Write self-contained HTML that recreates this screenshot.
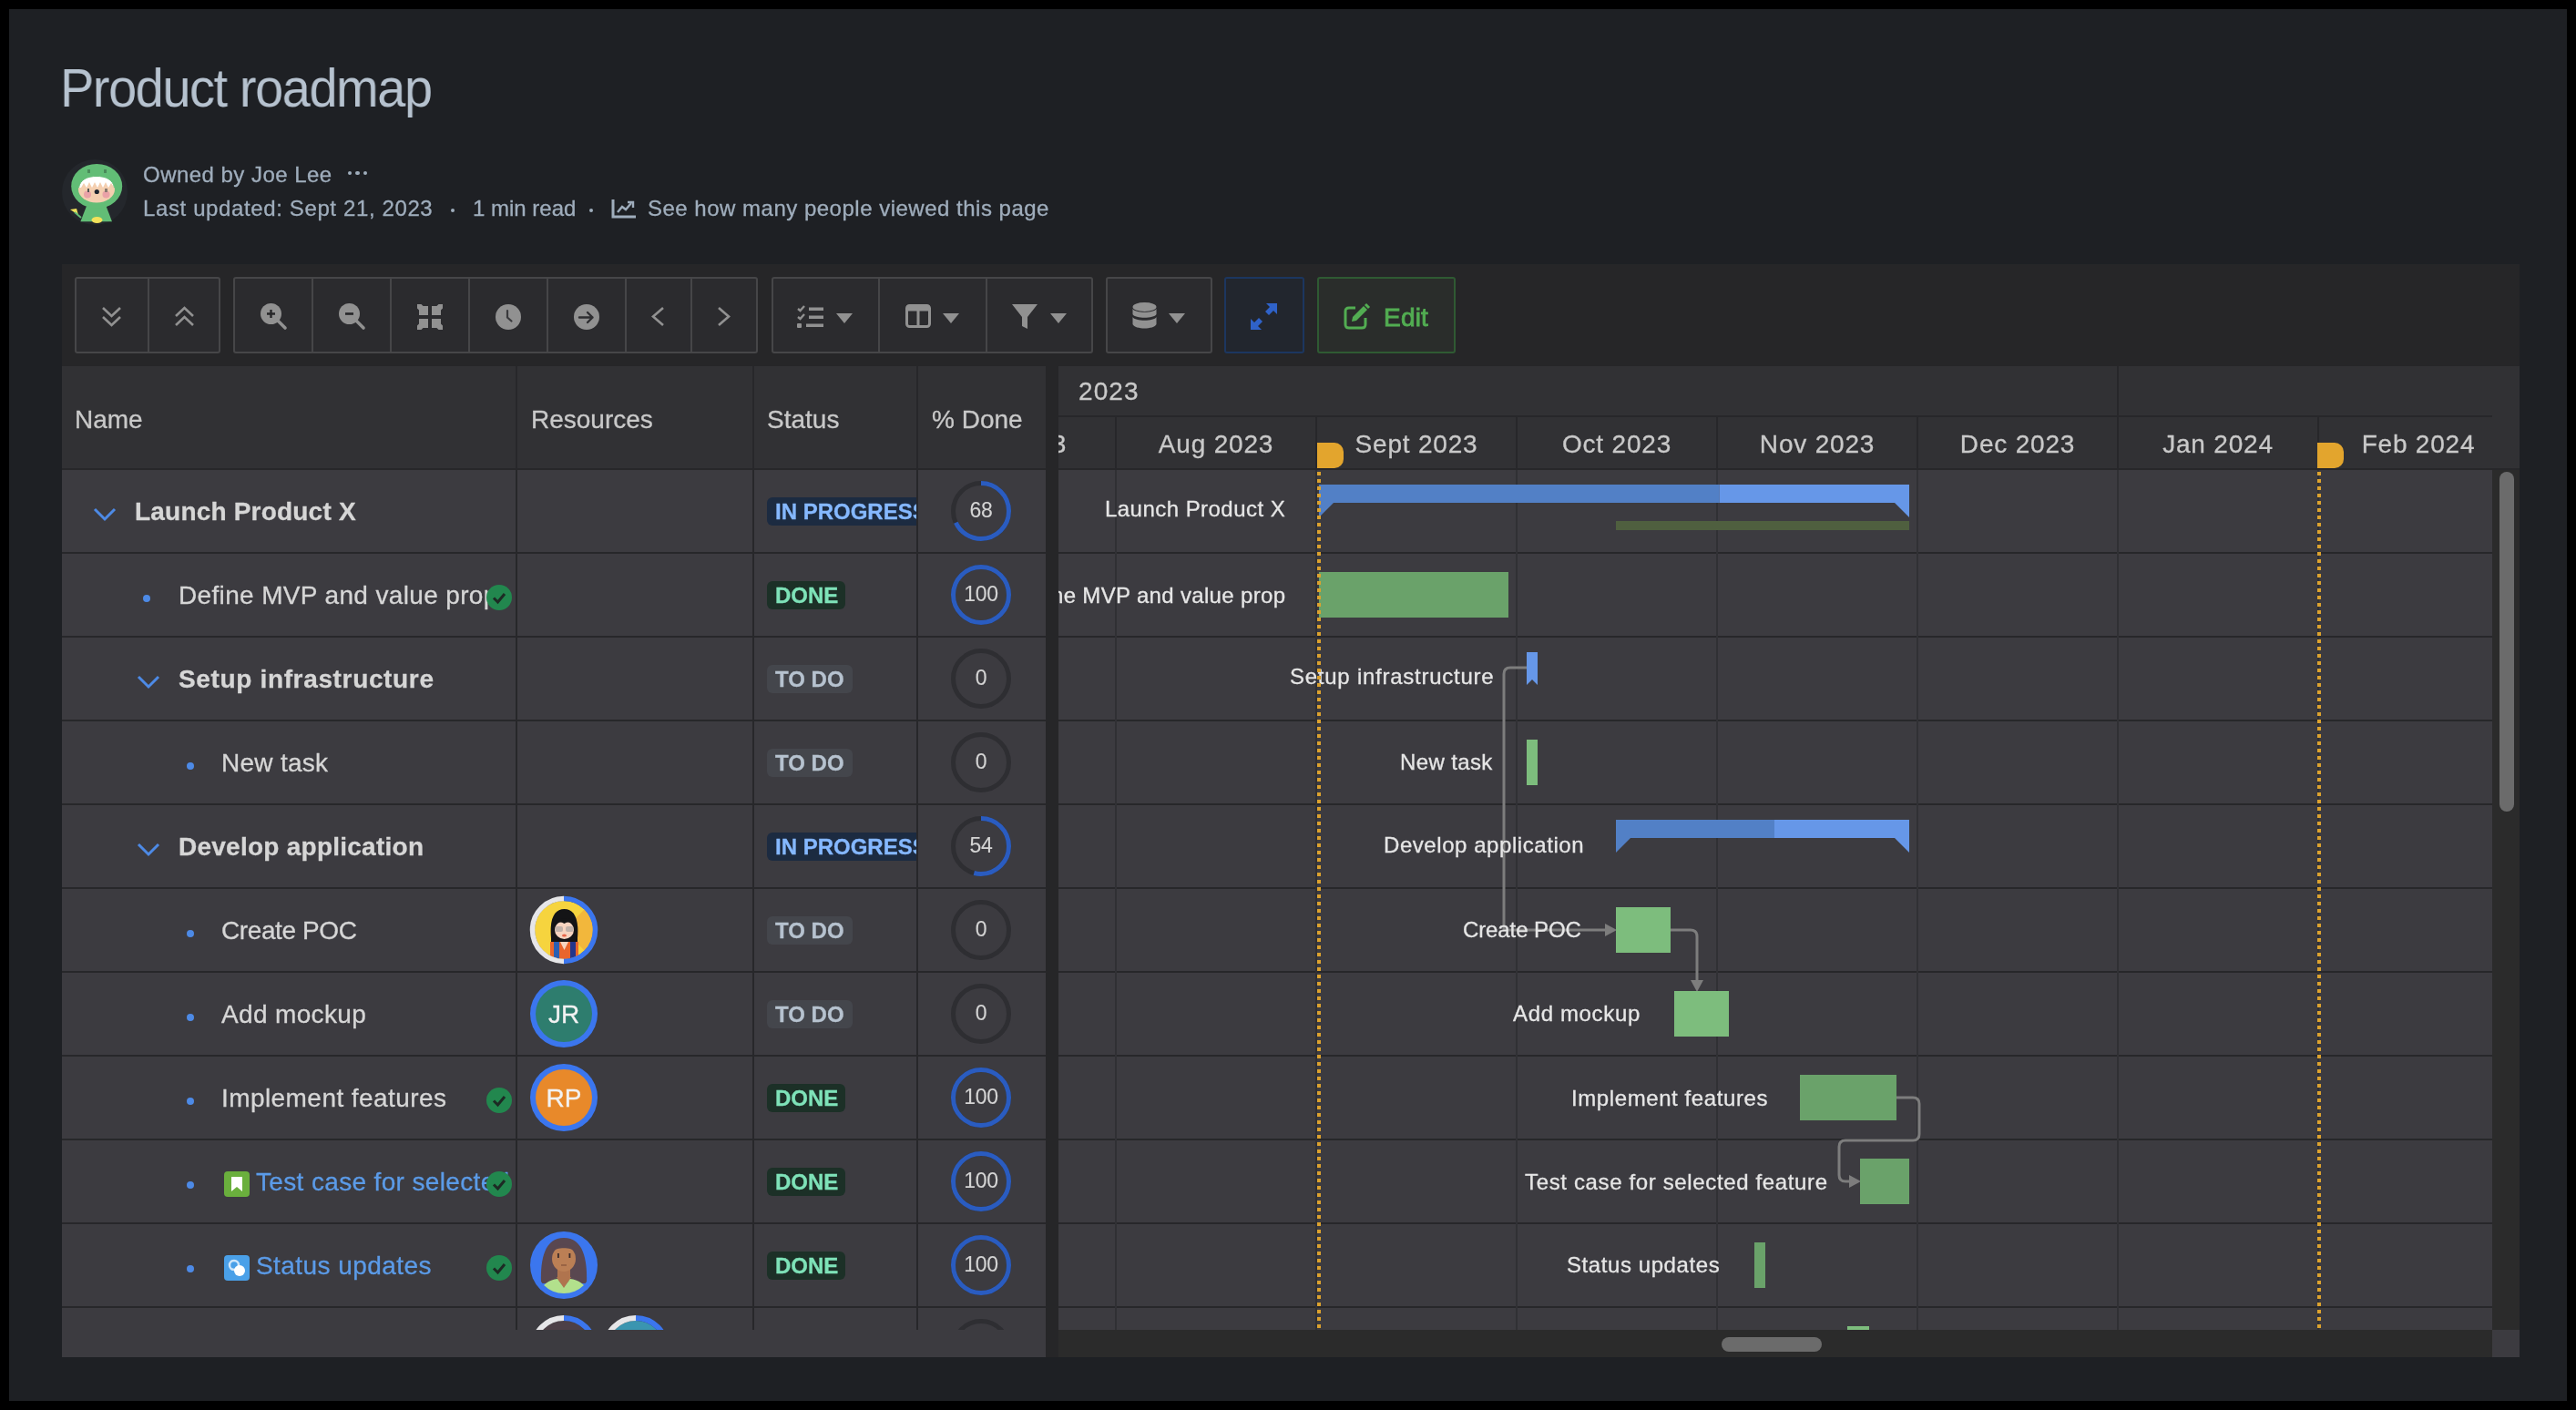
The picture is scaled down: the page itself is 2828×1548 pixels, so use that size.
<!DOCTYPE html><html><head><meta charset="utf-8"><style>
html,body{margin:0;padding:0;}
body{width:2828px;height:1548px;background:#000;position:relative;overflow:hidden;font-family:"Liberation Sans", sans-serif;}
.t{position:absolute;white-space:nowrap;will-change:transform;-webkit-text-stroke-width:0.3px;}
.r{position:absolute;}
.clip{position:absolute;overflow:hidden;}
svg{position:absolute;overflow:visible;}
</style></head><body>
<div class="r" style="left:10.00px;top:10.00px;width:2808.00px;height:1528.00px;background:#1e2024;"></div>
<div class="t" style="left:66.40px;top:67.21px;font-size:60px;line-height:60px;color:#b6c2cf;font-weight:400;letter-spacing:-1.5px;transform:scaleX(0.931);transform-origin:0 0;-webkit-text-stroke-width:0;">Product roadmap</div>
<svg style="left:68px;top:175px" width="72" height="72" viewBox="0 0 72 72">
<circle cx="36" cy="36" r="36" fill="#24272c"/>
<path d="M26.7 52 H48.8 L55 68.3 H20.4Z" fill="#62bd76"/>
<ellipse cx="38.5" cy="66.5" rx="6" ry="3.5" fill="#f2e25a"/>
<path d="M9 55 L16 54 L18 61Z" fill="#f2e25a"/>
<path d="M14 58 L21 64" stroke="#62bd76" stroke-width="2"/>
<ellipse cx="38.2" cy="29.4" rx="28" ry="24.5" fill="#62bd76"/>
<ellipse cx="38" cy="33" rx="20" ry="14.5" fill="#f4cfb0"/>
<path d="M18.5 31 C20 22 28 18.5 38 18.5 C48 18.5 56 22 57.5 31 L54 26 L51 31 L48 25 L45 31 L42 25 L39 31 L36 25 L33 31 L30 25 L27 31 L24 26 L21 31Z" fill="#ffffff"/>
<path d="M18.5 31 C20 22 28 18.5 38 18.5 C48 18.5 56 22 57.5 31" fill="none" stroke="#62bd76" stroke-width="1"/>
<circle cx="28" cy="38.5" r="4" fill="#e89aa6" opacity="0.85"/><circle cx="48.5" cy="38.5" r="4" fill="#e89aa6" opacity="0.85"/>
<rect x="28" y="32" width="2" height="4" fill="#555"/><rect x="47" y="32" width="3" height="4" fill="#8a7a70"/>
<circle cx="38.3" cy="35.5" r="2.6" fill="#1e2630"/>
<rect x="28" y="11" width="3" height="4" fill="#4a8a5a"/><rect x="46" y="11" width="3" height="4" fill="#4a8a5a"/>
</svg>
<div class="t" style="left:157.00px;top:179.68px;font-size:24px;line-height:24px;color:#9fadbc;font-weight:400;letter-spacing:0.47px;">Owned by Joe Lee</div>
<div class="r" style="left:381.50px;top:187.50px;width:4.50px;height:4.50px;background:#9fadbc;border-radius:50%;"></div>
<div class="r" style="left:390.00px;top:187.50px;width:4.50px;height:4.50px;background:#9fadbc;border-radius:50%;"></div>
<div class="r" style="left:398.50px;top:187.50px;width:4.50px;height:4.50px;background:#9fadbc;border-radius:50%;"></div>
<div class="t" style="left:157.00px;top:217.18px;font-size:24px;line-height:24px;color:#9fadbc;font-weight:400;letter-spacing:0.62px;">Last updated: Sept 21, 2023</div>
<div class="r" style="left:494.50px;top:228.50px;width:4.00px;height:4.00px;background:#9fadbc;border-radius:50%;"></div>
<div class="t" style="left:519.00px;top:217.18px;font-size:24px;line-height:24px;color:#9fadbc;font-weight:400;">1 min read</div>
<div class="r" style="left:646.50px;top:228.50px;width:4.00px;height:4.00px;background:#9fadbc;border-radius:50%;"></div>
<svg style="left:671px;top:218px" width="28" height="22" viewBox="0 0 28 22">
<path d="M2 1 V20 H27" fill="none" stroke="#9fadbc" stroke-width="3"/>
<path d="M7 15 L12 9 L16 12 L22 5" fill="none" stroke="#9fadbc" stroke-width="2.4"/>
<path d="M18 4 H24 V10" fill="none" stroke="#9fadbc" stroke-width="2.4"/>
</svg>
<div class="t" style="left:711.00px;top:217.18px;font-size:24px;line-height:24px;color:#9fadbc;font-weight:400;letter-spacing:0.5px;">See how many people viewed this page</div>
<div class="r" style="left:68.00px;top:290.00px;width:2698.00px;height:1200.00px;background:#262628;"></div>
<div class="r" style="left:82px;top:304px;width:160px;height:84px;box-sizing:border-box;border:2px solid #464648;border-radius:3px;background:#2b2b2e;"></div>
<div class="r" style="left:162.00px;top:304.00px;width:2.00px;height:84.00px;background:#464648;"></div>
<div class="r" style="left:256px;top:304px;width:576px;height:84px;box-sizing:border-box;border:2px solid #464648;border-radius:3px;background:#2b2b2e;"></div>
<div class="r" style="left:342.00px;top:304.00px;width:2.00px;height:84.00px;background:#464648;"></div>
<div class="r" style="left:428.00px;top:304.00px;width:2.00px;height:84.00px;background:#464648;"></div>
<div class="r" style="left:514.00px;top:304.00px;width:2.00px;height:84.00px;background:#464648;"></div>
<div class="r" style="left:600.00px;top:304.00px;width:2.00px;height:84.00px;background:#464648;"></div>
<div class="r" style="left:686.00px;top:304.00px;width:2.00px;height:84.00px;background:#464648;"></div>
<div class="r" style="left:758.00px;top:304.00px;width:2.00px;height:84.00px;background:#464648;"></div>
<div class="r" style="left:847px;top:304px;width:353px;height:84px;box-sizing:border-box;border:2px solid #464648;border-radius:3px;background:#2b2b2e;"></div>
<div class="r" style="left:964.00px;top:304.00px;width:2.00px;height:84.00px;background:#464648;"></div>
<div class="r" style="left:1082.00px;top:304.00px;width:2.00px;height:84.00px;background:#464648;"></div>
<div class="r" style="left:1214px;top:304px;width:117px;height:84px;box-sizing:border-box;border:2px solid #464648;border-radius:3px;background:#2b2b2e;"></div>
<div class="r" style="left:1344px;top:304px;width:88px;height:84px;box-sizing:border-box;border:2px solid #1c365f;border-radius:3px;background:#22262e;"></div>
<div class="r" style="left:1446px;top:304px;width:152px;height:84px;box-sizing:border-box;border:2px solid #2f5a33;border-radius:3px;background:#2a2d2b;"></div>
<svg style="left:111px;top:336px" width="23" height="25" viewBox="0 0 23 25"><path d="M2 2 L11.5 11 L21 2 M2 12 L11.5 21 L21 12" fill="none" stroke="#919191" stroke-width="2.6"/></svg>
<svg style="left:191px;top:335px" width="23" height="25" viewBox="0 0 23 25"><path d="M2 12 L11.5 3 L21 12 M2 22 L11.5 13 L21 22" fill="none" stroke="#919191" stroke-width="2.6"/></svg>
<svg style="left:285px;top:332px" width="30" height="31" viewBox="0 0 30 31"><circle cx="12.5" cy="12.5" r="11.5" fill="#919191"/><path d="M20 20 L28 28" stroke="#919191" stroke-width="3.6" stroke-linecap="round"/><path d="M12.5 8 V17 M8 12.5 H17" stroke="#262628" stroke-width="2.4"/></svg>
<svg style="left:371px;top:332px" width="30" height="31" viewBox="0 0 30 31"><circle cx="12.5" cy="12.5" r="11.5" fill="#919191"/><path d="M20 20 L28 28" stroke="#919191" stroke-width="3.6" stroke-linecap="round"/><path d="M8 12.5 H17" stroke="#262628" stroke-width="2.6"/></svg>
<svg style="left:458px;top:334px" width="28" height="28" viewBox="0 0 28 28"><g fill="#919191"><path d="M0 0 H4.5 L6.5 2 H12 V12 H2 V6.5 L0 4.5Z"/><path d="M28 0 H23.5 L21.5 2 H16 V12 H26 V6.5 L28 4.5Z"/><path d="M0 28 H4.5 L6.5 26 H12 V16 H2 V21.5 L0 23.5Z"/><path d="M28 28 H23.5 L21.5 26 H16 V16 H26 V21.5 L28 23.5Z"/></g></svg>
<svg style="left:543px;top:333px" width="30" height="30" viewBox="0 0 30 30"><circle cx="15" cy="15" r="14" fill="#919191"/><path d="M14 8 V15.5 L18.5 19.5" fill="none" stroke="#3a3a3d" stroke-width="2.2" stroke-linecap="round"/></svg>
<svg style="left:629px;top:333px" width="30" height="30" viewBox="0 0 30 30"><circle cx="15" cy="15" r="14" fill="#919191"/><path d="M7 15.5 H21.5 M16 10 L21.5 15.5 L16 21" fill="none" stroke="#2e2e31" stroke-width="2.4" stroke-linecap="round" stroke-linejoin="round"/></svg>
<svg style="left:714px;top:336px" width="16" height="23" viewBox="0 0 16 23"><path d="M14 2 L3 11.5 L14 21" fill="none" stroke="#919191" stroke-width="2.6"/></svg>
<svg style="left:787px;top:336px" width="16" height="23" viewBox="0 0 16 23"><path d="M2 2 L13 11.5 L2 21" fill="none" stroke="#919191" stroke-width="2.6"/></svg>
<svg style="left:875px;top:335px" width="30" height="25" viewBox="0 0 30 25"><g stroke="#919191" fill="none" stroke-width="2.4"><path d="M1 4 L3.5 6 L8 1 M1 13 L3.5 15 L8 10"/></g><g fill="#919191"><rect x="13" y="2.5" width="16" height="3.5"/><rect x="13" y="11.5" width="16" height="3.5"/><rect x="10" y="20.5" width="19" height="3.5"/><rect x="0" y="20" width="5" height="5" rx="1"/></g></svg>
<svg style="left:918px;top:344px" width="19" height="12" viewBox="0 0 19 12"><path d="M0 0 H18 L9 11Z" fill="#919191"/></svg>
<svg style="left:994px;top:334px" width="28" height="26" viewBox="0 0 28 26"><rect x="1.5" y="1.5" width="25" height="23" rx="3" fill="none" stroke="#919191" stroke-width="3"/><rect x="1.5" y="1.5" width="25" height="6" fill="#919191"/><rect x="12.5" y="4" width="3" height="20" fill="#919191"/></svg>
<svg style="left:1035px;top:344px" width="19" height="12" viewBox="0 0 19 12"><path d="M0 0 H18 L9 11Z" fill="#919191"/></svg>
<svg style="left:1111px;top:334px" width="28" height="27" viewBox="0 0 28 27"><path d="M0 0 H28 L17 14 V27 L11 24 V14Z" fill="#919191"/></svg>
<svg style="left:1153px;top:344px" width="19" height="12" viewBox="0 0 19 12"><path d="M0 0 H18 L9 11Z" fill="#919191"/></svg>
<svg style="left:1243px;top:332px" width="27" height="30" viewBox="0 0 27 30"><g fill="#919191"><ellipse cx="13.5" cy="5" rx="13" ry="5"/><path d="M0.5 7 C3 12 24 12 26.5 7 V13 C24 18 3 18 0.5 13Z"/><path d="M0.5 16 C3 21 24 21 26.5 16 V24 C24 30 3 30 0.5 24Z"/></g></svg>
<svg style="left:1283px;top:344px" width="19" height="12" viewBox="0 0 19 12"><path d="M0 0 H18 L9 11Z" fill="#919191"/></svg>
<svg style="left:1373px;top:333px" width="30" height="29" viewBox="0 0 30 29"><g fill="#2f62c9"><path d="M17 0 H29 V12 L25 8 L20 13 L16 9 L21 4Z"/><path d="M12 29 H0 V17 L4 21 L9 16 L13 20 L8 25Z"/></g></svg>
<svg style="left:1475px;top:333px" width="30" height="29" viewBox="0 0 30 29"><path d="M13 5 H6 C3 5 2 6 2 9 V23 C2 26 3 27 6 27 H20 C23 27 24 26 24 23 V16" fill="none" stroke="#52ad52" stroke-width="3"/><path d="M9 20 L10 15 L22 3 L26 7 L14 19Z" fill="#52ad52"/><path d="M24 1 L28 5" stroke="#52ad52" stroke-width="3"/></svg>
<div class="t" style="left:1518.50px;top:334.60px;font-size:28px;line-height:28px;color:#52ad52;font-weight:400;letter-spacing:0.2px;-webkit-text-stroke:0.9px #52ad52;">Edit</div>
<div class="r" style="left:68.00px;top:402.00px;width:1080.00px;height:1088.00px;background:#3c3b40;"></div>
<div class="r" style="left:68.00px;top:402.00px;width:1080.00px;height:112.00px;background:#313134;"></div>
<div class="r" style="left:68.00px;top:514.00px;width:1080.00px;height:2.00px;background:#27272a;"></div>
<div class="r" style="left:566.00px;top:402.00px;width:2.00px;height:1058.00px;background:#27272a;"></div>
<div class="r" style="left:826.00px;top:402.00px;width:2.00px;height:1058.00px;background:#27272a;"></div>
<div class="r" style="left:1006.00px;top:402.00px;width:2.00px;height:1058.00px;background:#27272a;"></div>
<div class="t" style="left:82.00px;top:447.30px;font-size:28px;line-height:28px;color:#c9c9c9;font-weight:400;">Name</div>
<div class="t" style="left:583.00px;top:447.30px;font-size:28px;line-height:28px;color:#c9c9c9;font-weight:400;">Resources</div>
<div class="t" style="left:842.00px;top:447.30px;font-size:28px;line-height:28px;color:#c9c9c9;font-weight:400;">Status</div>
<div class="t" style="left:1023.00px;top:447.30px;font-size:28px;line-height:28px;color:#c9c9c9;font-weight:400;">% Done</div>
<div class="clip" style="left:68px;top:516px;width:1080px;height:944px;">
<div class="r" style="left:0.00px;top:90.00px;width:1080.00px;height:2.00px;background:#27272a;"></div>
<svg style="left:34px;top:41px" width="26" height="16" viewBox="0 0 26 16"><path d="M2 2 L13 13 L24 2" fill="none" stroke="#4d8ae6" stroke-width="3"/></svg>
<div class="t" style="left:80.00px;top:32.30px;font-size:28px;line-height:28px;color:#d6d6d6;font-weight:700;letter-spacing:0.2px;">Launch Product X</div>
<div class="clip" style="left:760px;top:0px;width:178px;height:90px;">
<div class="r" style="left:14.00px;top:30.00px;width:200.00px;height:31.00px;background:#1c2b41;border-radius:6px;"></div>
<div class="t" style="left:23.00px;top:34.18px;font-size:24px;line-height:24px;color:#85b8ff;font-weight:700;">IN PROGRESS</div>
</div>
<svg style="left:976px;top:12px" width="66" height="66"><circle cx="33" cy="33" r="30.5" fill="none" stroke="#2e2e32" stroke-width="5"/><circle cx="33" cy="33" r="30.5" fill="none" stroke="#2a5cc0" stroke-width="5" stroke-dasharray="130.31 191.64" transform="rotate(-90 33 33)"/></svg>
<div class="t" style="left:709.00px;width:600px;text-align:center;top:33.03px;font-size:23px;line-height:23px;color:#d4d4d4;font-weight:400;letter-spacing:-0.3px;-webkit-text-stroke-width:0.1px;">68</div>
<div class="r" style="left:0.00px;top:182.00px;width:1080.00px;height:2.00px;background:#27272a;"></div>
<div class="r" style="left:89.00px;top:136.50px;width:8.00px;height:8.00px;background:#4d8ae6;border-radius:50%;"></div>
<div class="clip" style="left:128px;top:92px;width:370px;height:90px;">
<div class="t" style="left:0.00px;top:32.30px;font-size:28px;line-height:28px;color:#d6d6d6;font-weight:400;letter-spacing:0.35px;">Define MVP and value prop</div>
</div>
<svg style="left:466px;top:126px" width="28" height="28"><circle cx="14" cy="14" r="14" fill="#22874e"/><path d="M8 14.5 L12.5 19 L20 10" fill="none" stroke="#1d2a24" stroke-width="3"/></svg>
<div class="clip" style="left:760px;top:92px;width:178px;height:90px;">
<div class="r" style="left:14.00px;top:30.00px;width:86.00px;height:31.00px;background:#1c3027;border-radius:6px;"></div>
<div class="t" style="left:23.00px;top:34.18px;font-size:24px;line-height:24px;color:#7ee2b8;font-weight:700;">DONE</div>
</div>
<svg style="left:976px;top:104px" width="66" height="66"><circle cx="33" cy="33" r="30.5" fill="none" stroke="#2e2e32" stroke-width="5"/><circle cx="33" cy="33" r="30.5" fill="none" stroke="#2a5cc0" stroke-width="5" stroke-dasharray="191.64 191.64" transform="rotate(-90 33 33)"/></svg>
<div class="t" style="left:709.00px;width:600px;text-align:center;top:125.03px;font-size:23px;line-height:23px;color:#d4d4d4;font-weight:400;letter-spacing:-0.3px;-webkit-text-stroke-width:0.1px;">100</div>
<div class="r" style="left:0.00px;top:274.00px;width:1080.00px;height:2.00px;background:#27272a;"></div>
<svg style="left:82px;top:225px" width="26" height="16" viewBox="0 0 26 16"><path d="M2 2 L13 13 L24 2" fill="none" stroke="#4d8ae6" stroke-width="3"/></svg>
<div class="t" style="left:128.00px;top:216.30px;font-size:28px;line-height:28px;color:#d6d6d6;font-weight:700;letter-spacing:0.65px;">Setup infrastructure</div>
<div class="clip" style="left:760px;top:184px;width:178px;height:90px;">
<div class="r" style="left:14.00px;top:30.00px;width:94.00px;height:31.00px;background:#44464c;border-radius:6px;"></div>
<div class="t" style="left:23.00px;top:34.18px;font-size:24px;line-height:24px;color:#b6c2cf;font-weight:700;">TO DO</div>
</div>
<svg style="left:976px;top:196px" width="66" height="66"><circle cx="33" cy="33" r="30.5" fill="none" stroke="#2e2e32" stroke-width="5"/></svg>
<div class="t" style="left:709.00px;width:600px;text-align:center;top:217.03px;font-size:23px;line-height:23px;color:#d4d4d4;font-weight:400;letter-spacing:-0.3px;-webkit-text-stroke-width:0.1px;">0</div>
<div class="r" style="left:0.00px;top:366.00px;width:1080.00px;height:2.00px;background:#27272a;"></div>
<div class="r" style="left:137.00px;top:320.50px;width:8.00px;height:8.00px;background:#4d8ae6;border-radius:50%;"></div>
<div class="clip" style="left:175px;top:276px;width:323px;height:90px;">
<div class="t" style="left:0.00px;top:32.30px;font-size:28px;line-height:28px;color:#d6d6d6;font-weight:400;letter-spacing:0.28px;">New task</div>
</div>
<div class="clip" style="left:760px;top:276px;width:178px;height:90px;">
<div class="r" style="left:14.00px;top:30.00px;width:94.00px;height:31.00px;background:#44464c;border-radius:6px;"></div>
<div class="t" style="left:23.00px;top:34.18px;font-size:24px;line-height:24px;color:#b6c2cf;font-weight:700;">TO DO</div>
</div>
<svg style="left:976px;top:288px" width="66" height="66"><circle cx="33" cy="33" r="30.5" fill="none" stroke="#2e2e32" stroke-width="5"/></svg>
<div class="t" style="left:709.00px;width:600px;text-align:center;top:309.03px;font-size:23px;line-height:23px;color:#d4d4d4;font-weight:400;letter-spacing:-0.3px;-webkit-text-stroke-width:0.1px;">0</div>
<div class="r" style="left:0.00px;top:458.00px;width:1080.00px;height:2.00px;background:#27272a;"></div>
<svg style="left:82px;top:409px" width="26" height="16" viewBox="0 0 26 16"><path d="M2 2 L13 13 L24 2" fill="none" stroke="#4d8ae6" stroke-width="3"/></svg>
<div class="t" style="left:128.00px;top:400.30px;font-size:28px;line-height:28px;color:#d6d6d6;font-weight:700;letter-spacing:0.25px;">Develop application</div>
<div class="clip" style="left:760px;top:368px;width:178px;height:90px;">
<div class="r" style="left:14.00px;top:30.00px;width:200.00px;height:31.00px;background:#1c2b41;border-radius:6px;"></div>
<div class="t" style="left:23.00px;top:34.18px;font-size:24px;line-height:24px;color:#85b8ff;font-weight:700;">IN PROGRESS</div>
</div>
<svg style="left:976px;top:380px" width="66" height="66"><circle cx="33" cy="33" r="30.5" fill="none" stroke="#2e2e32" stroke-width="5"/><circle cx="33" cy="33" r="30.5" fill="none" stroke="#2a5cc0" stroke-width="5" stroke-dasharray="103.48 191.64" transform="rotate(-90 33 33)"/></svg>
<div class="t" style="left:709.00px;width:600px;text-align:center;top:401.03px;font-size:23px;line-height:23px;color:#d4d4d4;font-weight:400;letter-spacing:-0.3px;-webkit-text-stroke-width:0.1px;">54</div>
<div class="r" style="left:0.00px;top:550.00px;width:1080.00px;height:2.00px;background:#27272a;"></div>
<div class="r" style="left:137.00px;top:504.50px;width:8.00px;height:8.00px;background:#4d8ae6;border-radius:50%;"></div>
<div class="clip" style="left:175px;top:460px;width:323px;height:90px;">
<div class="t" style="left:0.00px;top:32.30px;font-size:28px;line-height:28px;color:#d6d6d6;font-weight:400;letter-spacing:-0.4px;">Create POC</div>
</div>
<svg style="left:514px;top:468px" width="74" height="74" viewBox="0 0 74 74">
<clipPath id="cg"><circle cx="37" cy="37" r="32"/></clipPath>
<g clip-path="url(#cg)"><rect x="0" y="0" width="74" height="74" fill="#f6d43e"/>
<path d="M37 37 L74 0 V74Z" fill="#f2b43c" opacity="0.9"/>
<path d="M23 46 C21 24 27 14 37.5 14 C48 14 54 24 52 46 L52 51 H23Z" fill="#141416"/>
<path d="M22 50 H53 V74 H22Z" fill="#e9652c"/>
<rect x="26" y="50" width="6" height="24" fill="#2b5fb3"/><rect x="44" y="50" width="6" height="24" fill="#24368a"/>
<path d="M33 50 L37.5 59 L42 50Z" fill="#f7d4c0"/>
<ellipse cx="37.5" cy="37" rx="10.5" ry="10" fill="#f7d4c0"/>
<path d="M27 31 C28 24 34 23 37.5 25 C41 23 47 24 48 31 C45 28 41 28 37.5 30 C34 28 30 28 27 31Z" fill="#141416"/>
<rect x="27.5" y="33" width="8.5" height="6" rx="2" fill="#b9aca4" opacity="0.85"/><rect x="39" y="33" width="8.5" height="6" rx="2" fill="#b9aca4" opacity="0.85"/>
<ellipse cx="37.5" cy="43" rx="2.5" ry="1.5" fill="#e8664a"/>
</g>
<path d="M37 2.5 A34.5 34.5 0 0 1 37 71.5" fill="none" stroke="#3b76ee" stroke-width="5.5"/><path d="M37 2.5 A34.5 34.5 0 0 0 37 71.5" fill="none" stroke="#e6e6e8" stroke-width="5.5"/>
</svg>
<div class="clip" style="left:760px;top:460px;width:178px;height:90px;">
<div class="r" style="left:14.00px;top:30.00px;width:94.00px;height:31.00px;background:#44464c;border-radius:6px;"></div>
<div class="t" style="left:23.00px;top:34.18px;font-size:24px;line-height:24px;color:#b6c2cf;font-weight:700;">TO DO</div>
</div>
<svg style="left:976px;top:472px" width="66" height="66"><circle cx="33" cy="33" r="30.5" fill="none" stroke="#2e2e32" stroke-width="5"/></svg>
<div class="t" style="left:709.00px;width:600px;text-align:center;top:493.03px;font-size:23px;line-height:23px;color:#d4d4d4;font-weight:400;letter-spacing:-0.3px;-webkit-text-stroke-width:0.1px;">0</div>
<div class="r" style="left:0.00px;top:642.00px;width:1080.00px;height:2.00px;background:#27272a;"></div>
<div class="r" style="left:137.00px;top:596.50px;width:8.00px;height:8.00px;background:#4d8ae6;border-radius:50%;"></div>
<div class="clip" style="left:175px;top:552px;width:323px;height:90px;">
<div class="t" style="left:0.00px;top:32.30px;font-size:28px;line-height:28px;color:#d6d6d6;font-weight:400;letter-spacing:0.35px;">Add mockup</div>
</div>
<svg style="left:514px;top:560px" width="74" height="74" viewBox="0 0 74 74"><circle cx="37" cy="37" r="37" fill="#3b76ee"/><circle cx="37" cy="37" r="31" fill="#2e7d6e"/></svg>
<div class="t" style="left:251.00px;width:600px;text-align:center;top:583.80px;font-size:28px;line-height:28px;color:#f2f2f2;font-weight:400;">JR</div>
<div class="clip" style="left:760px;top:552px;width:178px;height:90px;">
<div class="r" style="left:14.00px;top:30.00px;width:94.00px;height:31.00px;background:#44464c;border-radius:6px;"></div>
<div class="t" style="left:23.00px;top:34.18px;font-size:24px;line-height:24px;color:#b6c2cf;font-weight:700;">TO DO</div>
</div>
<svg style="left:976px;top:564px" width="66" height="66"><circle cx="33" cy="33" r="30.5" fill="none" stroke="#2e2e32" stroke-width="5"/></svg>
<div class="t" style="left:709.00px;width:600px;text-align:center;top:585.03px;font-size:23px;line-height:23px;color:#d4d4d4;font-weight:400;letter-spacing:-0.3px;-webkit-text-stroke-width:0.1px;">0</div>
<div class="r" style="left:0.00px;top:734.00px;width:1080.00px;height:2.00px;background:#27272a;"></div>
<div class="r" style="left:137.00px;top:688.50px;width:8.00px;height:8.00px;background:#4d8ae6;border-radius:50%;"></div>
<div class="clip" style="left:175px;top:644px;width:323px;height:90px;">
<div class="t" style="left:0.00px;top:32.30px;font-size:28px;line-height:28px;color:#d6d6d6;font-weight:400;letter-spacing:0.43px;">Implement features</div>
</div>
<svg style="left:466px;top:678px" width="28" height="28"><circle cx="14" cy="14" r="14" fill="#22874e"/><path d="M8 14.5 L12.5 19 L20 10" fill="none" stroke="#1d2a24" stroke-width="3"/></svg>
<svg style="left:514px;top:652px" width="74" height="74" viewBox="0 0 74 74"><circle cx="37" cy="37" r="37" fill="#3b76ee"/><circle cx="37" cy="37" r="31" fill="#e8892a"/></svg>
<div class="t" style="left:251.00px;width:600px;text-align:center;top:675.80px;font-size:28px;line-height:28px;color:#f2f2f2;font-weight:400;">RP</div>
<div class="clip" style="left:760px;top:644px;width:178px;height:90px;">
<div class="r" style="left:14.00px;top:30.00px;width:86.00px;height:31.00px;background:#1c3027;border-radius:6px;"></div>
<div class="t" style="left:23.00px;top:34.18px;font-size:24px;line-height:24px;color:#7ee2b8;font-weight:700;">DONE</div>
</div>
<svg style="left:976px;top:656px" width="66" height="66"><circle cx="33" cy="33" r="30.5" fill="none" stroke="#2e2e32" stroke-width="5"/><circle cx="33" cy="33" r="30.5" fill="none" stroke="#2a5cc0" stroke-width="5" stroke-dasharray="191.64 191.64" transform="rotate(-90 33 33)"/></svg>
<div class="t" style="left:709.00px;width:600px;text-align:center;top:677.03px;font-size:23px;line-height:23px;color:#d4d4d4;font-weight:400;letter-spacing:-0.3px;-webkit-text-stroke-width:0.1px;">100</div>
<div class="r" style="left:0.00px;top:826.00px;width:1080.00px;height:2.00px;background:#27272a;"></div>
<div class="r" style="left:137.00px;top:780.50px;width:8.00px;height:8.00px;background:#4d8ae6;border-radius:50%;"></div>
<svg style="left:178px;top:770px" width="28" height="28"><rect x="0" y="0" width="28" height="28" rx="4" fill="#6aaf3d"/><path d="M8 6 H20 V22 L14 17 L8 22Z" fill="#fff"/></svg>
<div class="clip" style="left:212px;top:736px;width:286px;height:90px;">
<div class="t" style="left:1.00px;top:32.30px;font-size:28px;line-height:28px;color:#5b9be8;font-weight:400;letter-spacing:0.35px;">Test case for selected feature</div>
</div>
<svg style="left:466px;top:770px" width="28" height="28"><circle cx="14" cy="14" r="14" fill="#22874e"/><path d="M8 14.5 L12.5 19 L20 10" fill="none" stroke="#1d2a24" stroke-width="3"/></svg>
<div class="clip" style="left:760px;top:736px;width:178px;height:90px;">
<div class="r" style="left:14.00px;top:30.00px;width:86.00px;height:31.00px;background:#1c3027;border-radius:6px;"></div>
<div class="t" style="left:23.00px;top:34.18px;font-size:24px;line-height:24px;color:#7ee2b8;font-weight:700;">DONE</div>
</div>
<svg style="left:976px;top:748px" width="66" height="66"><circle cx="33" cy="33" r="30.5" fill="none" stroke="#2e2e32" stroke-width="5"/><circle cx="33" cy="33" r="30.5" fill="none" stroke="#2a5cc0" stroke-width="5" stroke-dasharray="191.64 191.64" transform="rotate(-90 33 33)"/></svg>
<div class="t" style="left:709.00px;width:600px;text-align:center;top:769.03px;font-size:23px;line-height:23px;color:#d4d4d4;font-weight:400;letter-spacing:-0.3px;-webkit-text-stroke-width:0.1px;">100</div>
<div class="r" style="left:0.00px;top:918.00px;width:1080.00px;height:2.00px;background:#27272a;"></div>
<div class="r" style="left:137.00px;top:872.50px;width:8.00px;height:8.00px;background:#4d8ae6;border-radius:50%;"></div>
<svg style="left:178px;top:862px" width="28" height="28"><rect x="0" y="0" width="28" height="28" rx="4" fill="#4aa0e8"/><circle cx="11" cy="11" r="5" fill="none" stroke="#cfe6fa" stroke-width="2.5"/><circle cx="17" cy="17" r="6" fill="#fff"/></svg>
<div class="t" style="left:213.00px;top:860.30px;font-size:28px;line-height:28px;color:#5b9be8;font-weight:400;letter-spacing:0.43px;">Status updates</div>
<svg style="left:466px;top:862px" width="28" height="28"><circle cx="14" cy="14" r="14" fill="#22874e"/><path d="M8 14.5 L12.5 19 L20 10" fill="none" stroke="#1d2a24" stroke-width="3"/></svg>
<svg style="left:514px;top:836px" width="74" height="74" viewBox="0 0 74 74">
<circle cx="37" cy="37" r="37" fill="#3b76ee"/>
<clipPath id="cw"><circle cx="37" cy="37" r="31"/></clipPath>
<g clip-path="url(#cw)">
<path d="M12 57 C11 30 16 7 37 7 C58 7 63 30 62 57Z" fill="#594750"/>
<rect x="30" y="42" width="14" height="12" fill="#b0744e"/>
<ellipse cx="37" cy="30" rx="13" ry="14" fill="#bb7f55"/>
<path d="M24 22 C26 12 48 12 50 22 C45 17 29 17 24 22Z" fill="#594750"/>
<rect x="30" y="24" width="1.8" height="5" fill="#3a2a2a"/><rect x="42.5" y="24" width="1.8" height="5" fill="#3a2a2a"/>
<path d="M34 37 H40" stroke="#7a4a35" stroke-width="1.2"/>
<path d="M29 50 H45 L37 63Z" fill="#b0744e"/><path d="M8 74 C10 60 20 53 30 52 L37 62 L44 52 C54 53 64 60 66 74Z" fill="#b2e08c"/>
</g>
</svg>
<div class="clip" style="left:760px;top:828px;width:178px;height:90px;">
<div class="r" style="left:14.00px;top:30.00px;width:86.00px;height:31.00px;background:#1c3027;border-radius:6px;"></div>
<div class="t" style="left:23.00px;top:34.18px;font-size:24px;line-height:24px;color:#7ee2b8;font-weight:700;">DONE</div>
</div>
<svg style="left:976px;top:840px" width="66" height="66"><circle cx="33" cy="33" r="30.5" fill="none" stroke="#2e2e32" stroke-width="5"/><circle cx="33" cy="33" r="30.5" fill="none" stroke="#2a5cc0" stroke-width="5" stroke-dasharray="191.64 191.64" transform="rotate(-90 33 33)"/></svg>
<div class="t" style="left:709.00px;width:600px;text-align:center;top:861.03px;font-size:23px;line-height:23px;color:#d4d4d4;font-weight:400;letter-spacing:-0.3px;-webkit-text-stroke-width:0.1px;">100</div>
<div class="r" style="left:0.00px;top:1010.00px;width:1080.00px;height:2.00px;background:#27272a;"></div>
<svg style="left:514px;top:928px" width="74" height="74" viewBox="0 0 74 74"><circle cx="37" cy="37" r="31" fill="#4d4047"/><path d="M37 3 A34 34 0 0 1 37 71" fill="none" stroke="#3b76ee" stroke-width="6"/><path d="M37 3 A34 34 0 0 0 37 71" fill="none" stroke="#e6e6e8" stroke-width="6"/></svg>
<svg style="left:592.5px;top:928px" width="74" height="74" viewBox="0 0 74 74"><circle cx="37" cy="37" r="31" fill="#3a95b0"/><path d="M37 3 A34 34 0 0 1 37 71" fill="none" stroke="#3b76ee" stroke-width="6"/><path d="M37 3 A34 34 0 0 0 37 71" fill="none" stroke="#e6e6e8" stroke-width="6"/></svg>
<svg style="left:976px;top:932px" width="66" height="66"><circle cx="33" cy="33" r="30.5" fill="none" stroke="#2e2e32" stroke-width="5"/></svg>
</div>
<div class="r" style="left:1148.00px;top:402.00px;width:14.00px;height:1088.00px;background:#262628;"></div>
<div class="r" style="left:1162.00px;top:402.00px;width:1604.00px;height:113.00px;background:#313134;"></div>
<div class="r" style="left:1162.00px;top:456.00px;width:1574.00px;height:2.00px;background:#27272a;"></div>
<div class="r" style="left:1162.00px;top:514.00px;width:1604.00px;height:2.00px;background:#27272a;"></div>
<div class="r" style="left:2324.00px;top:402.00px;width:2.00px;height:54.00px;background:#27272a;"></div>
<div class="t" style="left:1183.50px;top:416.30px;font-size:28px;line-height:28px;color:#c9c9c9;font-weight:400;letter-spacing:1.1px;">2023</div>
<div class="clip" style="left:1162px;top:458px;width:1574px;height:56px;">
<div class="t" style="left:-347.10px;width:600px;text-align:center;top:15.80px;font-size:28px;line-height:28px;color:#c9c9c9;font-weight:400;letter-spacing:0.8px;">Jul 2023</div>
<div class="r" style="left:61.50px;top:0.00px;width:2.00px;height:56.00px;background:#27272a;"></div>
<div class="t" style="left:-127.10px;width:600px;text-align:center;top:15.80px;font-size:28px;line-height:28px;color:#c9c9c9;font-weight:400;letter-spacing:0.8px;">Aug 2023</div>
<div class="r" style="left:281.50px;top:0.00px;width:2.00px;height:56.00px;background:#27272a;"></div>
<div class="t" style="left:92.90px;width:600px;text-align:center;top:15.80px;font-size:28px;line-height:28px;color:#c9c9c9;font-weight:400;letter-spacing:0.8px;">Sept 2023</div>
<div class="r" style="left:501.50px;top:0.00px;width:2.00px;height:56.00px;background:#27272a;"></div>
<div class="t" style="left:312.90px;width:600px;text-align:center;top:15.80px;font-size:28px;line-height:28px;color:#c9c9c9;font-weight:400;letter-spacing:0.8px;">Oct 2023</div>
<div class="r" style="left:721.50px;top:0.00px;width:2.00px;height:56.00px;background:#27272a;"></div>
<div class="t" style="left:532.90px;width:600px;text-align:center;top:15.80px;font-size:28px;line-height:28px;color:#c9c9c9;font-weight:400;letter-spacing:0.8px;">Nov 2023</div>
<div class="r" style="left:941.50px;top:0.00px;width:2.00px;height:56.00px;background:#27272a;"></div>
<div class="t" style="left:752.90px;width:600px;text-align:center;top:15.80px;font-size:28px;line-height:28px;color:#c9c9c9;font-weight:400;letter-spacing:0.8px;">Dec 2023</div>
<div class="r" style="left:1161.50px;top:0.00px;width:2.00px;height:56.00px;background:#27272a;"></div>
<div class="t" style="left:972.90px;width:600px;text-align:center;top:15.80px;font-size:28px;line-height:28px;color:#c9c9c9;font-weight:400;letter-spacing:0.8px;">Jan 2024</div>
<div class="r" style="left:1381.50px;top:0.00px;width:2.00px;height:56.00px;background:#27272a;"></div>
<div class="t" style="left:1192.90px;width:600px;text-align:center;top:15.80px;font-size:28px;line-height:28px;color:#c9c9c9;font-weight:400;letter-spacing:0.8px;">Feb 2024</div>
</div>
<div class="clip" style="left:1162px;top:516px;width:1574px;height:944px;background:#3c3b40;">
<div class="r" style="left:0.00px;top:90.00px;width:1574.00px;height:2.00px;background:#27272a;"></div>
<div class="r" style="left:0.00px;top:182.00px;width:1574.00px;height:2.00px;background:#27272a;"></div>
<div class="r" style="left:0.00px;top:274.00px;width:1574.00px;height:2.00px;background:#27272a;"></div>
<div class="r" style="left:0.00px;top:366.00px;width:1574.00px;height:2.00px;background:#27272a;"></div>
<div class="r" style="left:0.00px;top:458.00px;width:1574.00px;height:2.00px;background:#27272a;"></div>
<div class="r" style="left:0.00px;top:550.00px;width:1574.00px;height:2.00px;background:#27272a;"></div>
<div class="r" style="left:0.00px;top:642.00px;width:1574.00px;height:2.00px;background:#27272a;"></div>
<div class="r" style="left:0.00px;top:734.00px;width:1574.00px;height:2.00px;background:#27272a;"></div>
<div class="r" style="left:0.00px;top:826.00px;width:1574.00px;height:2.00px;background:#27272a;"></div>
<div class="r" style="left:0.00px;top:918.00px;width:1574.00px;height:2.00px;background:#27272a;"></div>
<div class="r" style="left:0.00px;top:1010.00px;width:1574.00px;height:2.00px;background:#27272a;"></div>
<div class="r" style="left:61.50px;top:0.00px;width:2.00px;height:944.00px;background:#303034;"></div>
<div class="r" style="left:281.50px;top:0.00px;width:2.00px;height:944.00px;background:#303034;"></div>
<div class="r" style="left:501.50px;top:0.00px;width:2.00px;height:944.00px;background:#303034;"></div>
<div class="r" style="left:721.50px;top:0.00px;width:2.00px;height:944.00px;background:#303034;"></div>
<div class="r" style="left:941.50px;top:0.00px;width:2.00px;height:944.00px;background:#303034;"></div>
<div class="r" style="left:1161.50px;top:0.00px;width:2.00px;height:944.00px;background:#303034;"></div>
<div class="r" style="left:1381.50px;top:0.00px;width:2.00px;height:944.00px;background:#303034;"></div>
<svg style="left:0;top:0" width="1574" height="944" viewBox="1162 516 1574 944"><g fill="none" stroke="#7d7d7d" stroke-width="3"><path d="M1676 733 H1658 Q1651 733 1651 740 V1021 H1764"/><path d="M1834 1021 H1856 Q1863 1021 1863 1028 V1078"/><path d="M2082 1205 H2100 Q2107 1205 2107 1212 V1245 Q2107 1252 2100 1252 H2026 Q2019 1252 2019 1259 V1290 Q2019 1297 2026 1297 H2032"/></g><g fill="#7d7d7d"><path d="M1762 1014 L1775 1021 L1762 1028Z"/><path d="M1856 1076 L1863 1089 L1870 1076Z"/><path d="M2030 1290 L2043 1297 L2030 1304Z"/></g></svg>
<svg style="left:286px;top:16px" width="648" height="36" viewBox="0 0 648 36"><path d="M0 0 H439.5 V20 H16 L0 36Z" fill="#5280c6"/><path d="M439.5 0 H648 V36 L632 20 H439.5Z" fill="#6697e8"/></svg>
<div class="r" style="left:612.00px;top:56.00px;width:322.00px;height:10.00px;background:#4f5f3f;"></div>
<div class="t" style="right:calc(100% - 249.46px);top:31.18px;font-size:24px;line-height:24px;color:#e6e6e6;font-weight:400;letter-spacing:0.46px;-webkit-text-stroke:0.3px #e6e6e6;">Launch Product X</div>
<div class="r" style="left:286.00px;top:112.00px;width:208.00px;height:50.00px;background:#6aa26a;"></div>
<div class="t" style="right:calc(100% - 249.33px);top:125.68px;font-size:24px;line-height:24px;color:#e6e6e6;font-weight:400;letter-spacing:0.33px;-webkit-text-stroke:0.3px #e6e6e6;">Define MVP and value prop</div>
<svg style="left:514px;top:200px" width="12" height="36"><path d="M0 0 H12 V36 L6 30 L0 36Z" fill="#6697e8"/></svg>
<div class="t" style="right:calc(100% - 478.75px);top:214.68px;font-size:24px;line-height:24px;color:#e6e6e6;font-weight:400;letter-spacing:0.75px;-webkit-text-stroke:0.3px #e6e6e6;">Setup infrastructure</div>
<div class="r" style="left:514.00px;top:296.00px;width:12.00px;height:50.00px;background:#7dbd7d;"></div>
<div class="t" style="right:calc(100% - 476.37px);top:308.68px;font-size:24px;line-height:24px;color:#e6e6e6;font-weight:400;letter-spacing:0.37px;-webkit-text-stroke:0.3px #e6e6e6;">New task</div>
<svg style="left:612px;top:384px" width="322" height="36" viewBox="0 0 322 36"><path d="M0 0 H174 V20 H16 L0 36Z" fill="#5280c6"/><path d="M174 0 H322 V36 L306 20 H174Z" fill="#6697e8"/></svg>
<div class="t" style="right:calc(100% - 577.06px);top:399.68px;font-size:24px;line-height:24px;color:#e6e6e6;font-weight:400;letter-spacing:0.56px;-webkit-text-stroke:0.3px #e6e6e6;">Develop application</div>
<div class="r" style="left:612.00px;top:480.00px;width:60.00px;height:50.00px;background:#7dbd7d;"></div>
<div class="t" style="right:calc(100% - 573.90px);top:492.68px;font-size:24px;line-height:24px;color:#e6e6e6;font-weight:400;letter-spacing:-0.1px;-webkit-text-stroke:0.3px #e6e6e6;">Create POC</div>
<div class="r" style="left:676.00px;top:572.00px;width:60.00px;height:50.00px;background:#7dbd7d;"></div>
<div class="t" style="right:calc(100% - 638.65px);top:584.68px;font-size:24px;line-height:24px;color:#e6e6e6;font-weight:400;letter-spacing:0.65px;-webkit-text-stroke:0.3px #e6e6e6;">Add mockup</div>
<div class="r" style="left:814.00px;top:664.00px;width:106.00px;height:50.00px;background:#6aa26a;"></div>
<div class="t" style="right:calc(100% - 778.59px);top:677.68px;font-size:24px;line-height:24px;color:#e6e6e6;font-weight:400;letter-spacing:0.59px;-webkit-text-stroke:0.3px #e6e6e6;">Implement features</div>
<div class="r" style="left:880.00px;top:756.00px;width:54.00px;height:50.00px;background:#6aa26a;"></div>
<div class="t" style="right:calc(100% - 844.64px);top:769.68px;font-size:24px;line-height:24px;color:#e6e6e6;font-weight:400;letter-spacing:0.64px;-webkit-text-stroke:0.3px #e6e6e6;">Test case for selected feature</div>
<div class="r" style="left:764.00px;top:848.00px;width:12.00px;height:50.00px;background:#6aa26a;"></div>
<div class="t" style="right:calc(100% - 726.58px);top:860.68px;font-size:24px;line-height:24px;color:#e6e6e6;font-weight:400;letter-spacing:0.58px;-webkit-text-stroke:0.3px #e6e6e6;">Status updates</div>
<div class="r" style="left:866.00px;top:940.00px;width:24.00px;height:14.00px;background:#7dbd7d;"></div>
<div class="r" style="left:284px;top:2px;width:4px;height:944px;background:repeating-linear-gradient(to bottom,#dca22e 0 4px,transparent 4px 8px);"></div>
<div class="r" style="left:1382px;top:2px;width:4px;height:944px;background:repeating-linear-gradient(to bottom,#dca22e 0 4px,transparent 4px 8px);"></div>
</div>
<div class="r" style="left:1445.5px;top:486px;width:29px;height:28px;background:#e3a52d;border-radius:0 10px 10px 0;"></div>
<div class="r" style="left:2543.5px;top:486px;width:29px;height:28px;background:#e3a52d;border-radius:0 10px 10px 0;"></div>
<div class="r" style="left:2736.00px;top:516.00px;width:30.00px;height:944.00px;background:#2b2b2b;"></div>
<div class="r" style="left:2744.00px;top:518.00px;width:16.00px;height:373.00px;background:#6b6b6b;border-radius:8px;"></div>
<div class="r" style="left:1162.00px;top:1460.00px;width:1574.00px;height:30.00px;background:#2b2b2b;"></div>
<div class="r" style="left:1890.00px;top:1468.00px;width:110.00px;height:16.00px;background:#6b6b6b;border-radius:8px;"></div>
<div class="r" style="left:2736.00px;top:1460.00px;width:30.00px;height:30.00px;background:#3c3b40;"></div>
<div class="r" style="left:68.00px;top:1460.00px;width:1080.00px;height:30.00px;background:#3c3b40;"></div>
</body></html>
